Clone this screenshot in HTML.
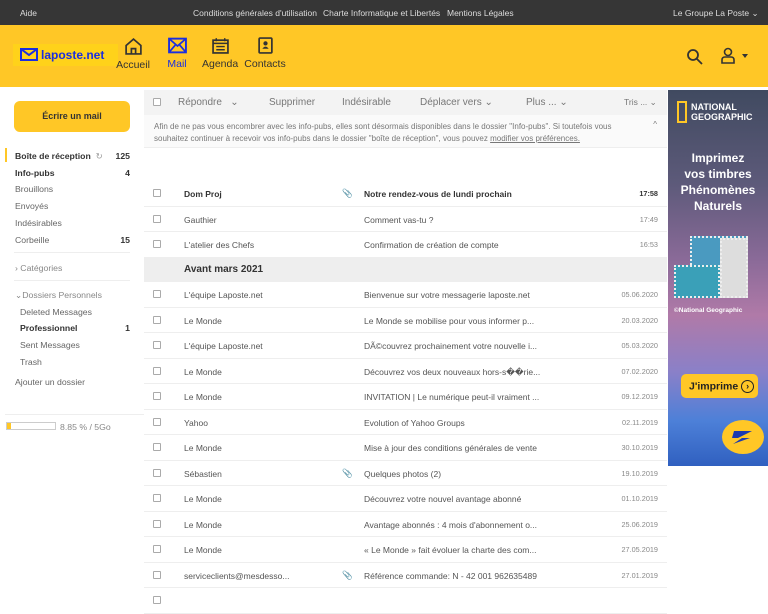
<!DOCTYPE html>
<html><head><meta charset="utf-8"><style>
*{box-sizing:border-box;margin:0;padding:0}
body{width:768px;height:596px;overflow:hidden;font-family:"Liberation Sans",sans-serif;background:#fff;position:relative;color:#333}
.top{position:absolute;left:0;top:0;width:768px;height:25px;background:#363636;color:#ddd;font-size:8.5px}
.top span{position:absolute;top:8px}
.hdr{position:absolute;left:0;top:25px;width:768px;height:62px;background:#ffc726}
.nav{position:absolute;top:12px;text-align:center;font-size:10.5px;color:#333}
.nav svg{display:block;margin:0 auto 4px}
.side{position:absolute;left:0;top:87px;width:144px;height:509px;font-size:8.7px}
.btn{position:absolute;left:14px;top:14px;width:116px;height:31px;background:#ffc726;border-radius:6px;text-align:center;line-height:31px;font-weight:bold;font-size:9px;color:#333}
.f{position:absolute;left:15px;color:#666}
.f b{color:#333}
.n{position:absolute;right:14px;font-weight:bold;color:#333}
.main{position:absolute;left:144px;top:90px;width:523px;height:506px}
.tb{position:absolute;left:0;top:0;width:523px;height:25px;background:#f3f3f3;font-size:10px;color:#777}
.tb span{position:absolute;top:7px}
.cb{position:absolute;width:8px;height:8px;border:1px solid #aaa;border-radius:1px;background:#fff}
.note{position:absolute;left:0;top:25px;width:523px;height:33px;background:#fafafa;font-size:8px;color:#777;line-height:12px;padding:6px 0 0 10px;border-bottom:1px solid #eee}
.row{position:absolute;left:0;width:523px;height:25.5px;border-bottom:1px solid #eee;font-size:8.5px;color:#555}
.row .s{position:absolute;left:40px;top:8px}
.row .j{position:absolute;left:220px;top:8px}
.row .d{position:absolute;right:9px;top:8px;font-size:7.3px;color:#888}
.row .cb{left:9px;top:8px}
.grp{position:absolute;left:0;top:168px;width:523px;height:24px;background:#eee;font-weight:bold;font-size:10px;padding:6px 0 0 40px;color:#333}
.ad{position:absolute;left:668px;top:90px;width:100px;height:376px;background:linear-gradient(180deg,#404a60 0%,#5d5a7a 25%,#8a6a98 45%,#b07aa8 60%,#8a80c8 75%,#4d80d8 88%,#3060c0 100%)}
</style></head><body>
<div class="top">
<span style="left:20px">Aide</span>
<span style="left:193px">Conditions générales d'utilisation</span>
<span style="left:323px">Charte Informatique et Libertés</span>
<span style="left:447px">Mentions Légales</span>
<span style="left:673px">Le Groupe La Poste ⌄</span>
</div>
<div class="hdr">
<div style="position:absolute;left:13px;top:19px;width:105px;height:22px;background:#ffd21a"></div>
<svg style="position:absolute;left:20px;top:23px" width="18" height="13" viewBox="0 0 18 13"><rect x="1" y="1" width="16" height="11" fill="none" stroke="#1a2ee0" stroke-width="2"/><path d="M1 1 L9 7 L17 1" fill="none" stroke="#1a2ee0" stroke-width="2"/></svg>
<div style="position:absolute;left:41px;top:23px;font-weight:bold;font-size:12px;color:#1a2ee0">laposte.net</div>
<div class="nav" style="left:116px;width:34px"><svg width="19" height="18" viewBox="0 0 18 17"><path d="M2 8 L9 2 L16 8 V16 H2 Z M7 16 V11 H11 V16" fill="none" stroke="#333" stroke-width="1.6"/></svg>Accueil</div>
<div class="nav" style="left:163px;width:28px;color:#1a2ee0"><svg width="19" height="17" viewBox="0 0 18 15"><rect x="1" y="1" width="16" height="13" fill="none" stroke="#1a2ee0" stroke-width="1.8"/><path d="M1 1 L9 8 L17 1 M1 14 L7 7 M17 14 L11 7" fill="none" stroke="#1a2ee0" stroke-width="1.6"/></svg>Mail</div>
<div class="nav" style="left:202px;width:36px"><svg width="17" height="17" viewBox="0 0 16 16"><rect x="1" y="3" width="14" height="12" fill="none" stroke="#333" stroke-width="1.6"/><path d="M1 6 H15 M4 1 V4 M12 1 V4 M4 9 H12 M4 12 H12" stroke="#333" stroke-width="1.3"/></svg>Agenda</div>
<div class="nav" style="left:244px;width:42px"><svg width="15" height="17" viewBox="0 0 14 16"><rect x="1" y="1" width="12" height="14" rx="1" fill="none" stroke="#333" stroke-width="1.6"/><circle cx="7" cy="6" r="2" fill="#333"/><path d="M4 11 Q7 7 10 11Z" fill="#333"/></svg>Contacts</div>
<svg style="position:absolute;left:686px;top:23px" width="17" height="17" viewBox="0 0 17 17"><circle cx="7" cy="7" r="5" fill="none" stroke="#333" stroke-width="1.8"/><path d="M11 11 L16 16" stroke="#333" stroke-width="1.8"/></svg>
<svg style="position:absolute;left:721px;top:22px" width="14" height="17" viewBox="0 0 14 17"><circle cx="7" cy="5" r="3.5" fill="none" stroke="#333" stroke-width="1.6"/><path d="M1 16 V13 Q1 10 4 10 H10 Q13 10 13 13 V16 Z" fill="none" stroke="#333" stroke-width="1.6"/></svg>
<div style="position:absolute;left:742px;top:29px;border-left:3px solid transparent;border-right:3px solid transparent;border-top:4px solid #333"></div>
</div>
<div class="side">
<div class="btn">Écrire un mail</div>
<div style="position:absolute;left:5px;top:61px;width:2px;height:14px;background:#ffc726"></div>
<div class="f" style="top:64px"><b>Boîte de réception</b> <span style="color:#999">&nbsp;↻</span></div><div class="n" style="top:64px">125</div>
<div class="f" style="top:81px"><b>Info-pubs</b></div><div class="n" style="top:81px">4</div>
<div class="f" style="top:97px">Brouillons</div>
<div class="f" style="top:114px">Envoyés</div>
<div class="f" style="top:131px">Indésirables</div>
<div class="f" style="top:148px">Corbeille</div><div class="n" style="top:148px">15</div>
<div style="position:absolute;left:14px;top:165px;width:116px;height:1px;background:#eee"></div>
<div class="f" style="top:176px;color:#888">› Catégories</div>
<div style="position:absolute;left:14px;top:193px;width:116px;height:1px;background:#eee"></div>
<div class="f" style="top:203px;color:#888">⌄Dossiers Personnels</div>
<div class="f" style="top:220px;left:20px">Deleted Messages</div>
<div class="f" style="top:236px;left:20px"><b>Professionnel</b></div><div class="n" style="top:236px">1</div>
<div class="f" style="top:253px;left:20px">Sent Messages</div>
<div class="f" style="top:270px;left:20px">Trash</div>
<div class="f" style="top:290px">Ajouter un dossier</div>
<div style="position:absolute;left:5px;top:327px;width:139px;height:1px;background:#eee"></div>
<div style="position:absolute;left:6px;top:335px;width:50px;height:8px;border:1px solid #ccc"><div style="width:4px;height:6px;background:#ffc726"></div></div>
<div class="f" style="top:335px;left:60px;color:#888">8.85 % / 5Go</div>
</div>
<div class="main">
<div class="tb"><div class="cb" style="left:9px;top:8px"></div>
<span style="left:34px">Répondre &nbsp;&nbsp;⌄</span><span style="left:125px">Supprimer</span><span style="left:198px">Indésirable</span><span style="left:276px">Déplacer vers ⌄</span><span style="left:382px">Plus ... ⌄</span><span style="left:480px;font-size:8.5px">Tris ... ⌄</span></div>
<div class="note">Afin de ne pas vous encombrer avec les info-pubs, elles sont désormais disponibles dans le dossier "Info-pubs". Si toutefois vous<br>souhaitez continuer à recevoir vos info-pubs dans le dossier "boîte de réception", vous pouvez <u>modifier vos préférences.</u><span style="position:absolute;right:10px;top:4px">^</span></div>
<div class="row" style="top:91px"><div class="cb"></div><span class="s" style="font-weight:bold;color:#333">Dom Proj</span><span style="position:absolute;left:198px;top:7px;color:#bbb">📎</span><span class="j" style="font-weight:bold;color:#333">Notre rendez-vous de lundi prochain</span><span class="d" style="font-weight:bold;color:#333">17:58</span></div>
<div class="row" style="top:116.5px"><div class="cb"></div><span class="s">Gauthier</span><span class="j">Comment vas-tu ?</span><span class="d">17:49</span></div>
<div class="row" style="top:142px"><div class="cb"></div><span class="s">L'atelier des Chefs</span><span class="j">Confirmation de création de compte</span><span class="d">16:53</span></div>
<div class="grp">Avant mars 2021</div>
<div class="row" style="top:192px"><div class="cb"></div><span class="s">L'équipe Laposte.net</span><span class="j">Bienvenue sur votre messagerie laposte.net</span><span class="d">05.06.2020</span></div>
<div class="row" style="top:217.5px"><div class="cb"></div><span class="s">Le Monde</span><span class="j">Le Monde se mobilise pour vous informer p...</span><span class="d">20.03.2020</span></div>
<div class="row" style="top:243px"><div class="cb"></div><span class="s">L'équipe Laposte.net</span><span class="j">DÃ©couvrez prochainement votre nouvelle i...</span><span class="d">05.03.2020</span></div>
<div class="row" style="top:268.5px"><div class="cb"></div><span class="s">Le Monde</span><span class="j">Découvrez vos deux nouveaux hors-s��rie...</span><span class="d">07.02.2020</span></div>
<div class="row" style="top:294px"><div class="cb"></div><span class="s">Le Monde</span><span class="j">INVITATION | Le numérique peut-il vraiment ...</span><span class="d">09.12.2019</span></div>
<div class="row" style="top:319.5px"><div class="cb"></div><span class="s">Yahoo</span><span class="j">Evolution of Yahoo Groups</span><span class="d">02.11.2019</span></div>
<div class="row" style="top:345px"><div class="cb"></div><span class="s">Le Monde</span><span class="j">Mise à jour des conditions générales de vente</span><span class="d">30.10.2019</span></div>
<div class="row" style="top:370.5px"><div class="cb"></div><span class="s">Sébastien</span><span style="position:absolute;left:198px;top:7px;color:#bbb">📎</span><span class="j">Quelques photos (2)</span><span class="d">19.10.2019</span></div>
<div class="row" style="top:396px"><div class="cb"></div><span class="s">Le Monde</span><span class="j">Découvrez votre nouvel avantage abonné</span><span class="d">01.10.2019</span></div>
<div class="row" style="top:421.5px"><div class="cb"></div><span class="s">Le Monde</span><span class="j">Avantage abonnés : 4 mois d'abonnement o...</span><span class="d">25.06.2019</span></div>
<div class="row" style="top:447px"><div class="cb"></div><span class="s">Le Monde</span><span class="j">« Le Monde » fait évoluer la charte des com...</span><span class="d">27.05.2019</span></div>
<div class="row" style="top:472.5px"><div class="cb"></div><span class="s">serviceclients@mesdesso...</span><span style="position:absolute;left:198px;top:7px;color:#bbb">📎</span><span class="j">Référence commande: N - 42 001 962635489</span><span class="d">27.01.2019</span></div>
<div class="row" style="top:498px"><div class="cb"></div></div>
</div>
<div class="ad">
<div style="position:absolute;left:9px;top:11px;width:10px;height:22px;border:2.5px solid #ffc726"></div>
<div style="position:absolute;left:23px;top:12px;color:#fff;font-size:9px;font-weight:bold;line-height:10px">NATIONAL<br>GEOGRAPHIC</div>
<div style="position:absolute;left:0;width:100px;top:60px;color:#fff;font-weight:bold;font-size:12px;line-height:16px;text-align:center">Imprimez<br>vos timbres<br>Phénomènes<br>Naturels</div>
<div style="position:absolute;left:22px;top:146px;width:58px;height:32px;background:#4a9ac0;border:2px dotted #eee"></div>
<div style="position:absolute;left:6px;top:175px;width:46px;height:33px;background:#3aa0b8;border:2px dotted #eee"></div>
<div style="position:absolute;left:52px;top:148px;width:28px;height:60px;background:#ddd;border:2px dotted #eee"></div>
<div style="position:absolute;left:6px;top:217px;color:#fff;font-size:6.5px;font-weight:bold">©National Geographic</div>
<div style="position:absolute;left:13px;top:284px;width:77px;height:24px;background:#ffc726;border-radius:5px;font-weight:bold;font-size:10.5px;color:#222;padding:6px 0 0 8px">J'imprime <span style="display:inline-block;width:13px;height:13px;border:1.5px solid #222;border-radius:50%;font-size:9px;line-height:10px;text-align:center;vertical-align:middle">›</span></div>
<div style="position:absolute;left:54px;top:330px;width:42px;height:34px;background:#ffc726;border-radius:50%"></div>
<svg style="position:absolute;left:62px;top:338px" width="26" height="18" viewBox="0 0 26 18"><path d="M4 3 H22 L8 10 H20 L3 16 L12 10 H2 Z" fill="#1a3ab0"/></svg>
</div>
</body></html>
